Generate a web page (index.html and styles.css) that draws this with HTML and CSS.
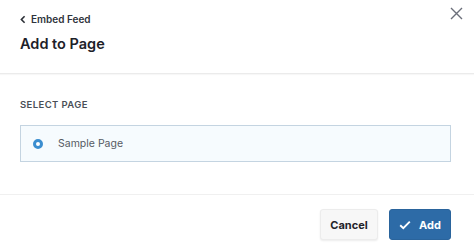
FILE: index.html
```html
<!DOCTYPE html>
<html lang="en">
<head>
<meta charset="utf-8">
<link rel="stylesheet" href="styles.css">
</head>
<body>
<div class="modal">
  <header class="head">
    <a class="back" href="#">
      <svg class="chev" width="6" height="9" viewBox="0 0 6 9"><path d="M4.6 1.2 L1.4 4.5 L4.6 7.8" fill="none" stroke="#2b2f36" stroke-width="1.6"/></svg>
      <span>Embed Feed</span>
    </a>
    <h1 class="title">Add to Page</h1>
    <button class="close" aria-label="Close">
      <svg width="13" height="13" viewBox="0 0 13 13"><path d="M1 1 L12 12 M12 1 L1 12" stroke="#6b6f7a" stroke-width="1.4" fill="none"/></svg>
    </button>
  </header>
  <section class="body">
    <div class="label">SELECT PAGE</div>
    <label class="option">
      <span class="radio"></span>
      <span class="opt-text">Sample Page</span>
    </label>
  </section>
  <footer class="foot">
    <button class="btn cancel">Cancel</button>
    <button class="btn add">
      <svg width="12" height="10" viewBox="0 0 12 10"><path d="M1.2 5.2 L4.3 8.2 L10.8 1.6" fill="none" stroke="#fff" stroke-width="1.9"/></svg>
      <span>Add</span>
    </button>
  </footer>
</div>
</body>
</html>
```
FILE: styles.css
```css
html, body {
  margin: 0;
  padding: 0;
  background: #fff;
}
body {
  font-family: Inter, "Noto Sans", "Liberation Sans", sans-serif;
  color: #1e2229;
}
.modal {
  width: 474px;
  height: 250px;
  overflow: hidden;
}
.head {
  position: relative;
  padding: 12px 23px 19px 20px;
  border-bottom: 1px solid #ebebeb;
  box-shadow: 0 1px 1px rgba(0,0,0,0.03);
}
.back {
  display: flex;
  align-items: center;
  gap: 5px;
  height: 14px;
  font-size: 10px;
  font-weight: 600;
  color: #2f343c;
  text-decoration: none;
}
.chev {
  display: block;
}
.title {
  margin: 8px 0 0;
  font-size: 14.5px;
  line-height: 20px;
  font-weight: 600;
  color: #1d2128;
}
.close {
  position: absolute;
  top: 7px;
  right: 11px;
  border: 0;
  background: none;
  padding: 0;
  width: 13px;
  height: 13px;
}
.close svg {
  display: block;
}
.body {
  padding: 24px 23px 32px 20px;
  border-bottom: 1px solid #f0f0f0;
}
.label {
  font-size: 9.5px;
  line-height: 14px;
  font-weight: 600;
  letter-spacing: 0.4px;
  color: #4a4f57;
}
.option {
  margin-top: 13px;
  height: 35px;
  border: 1px solid #c4d4e1;
  background: #f6fbfe;
  display: flex;
  align-items: center;
  padding-left: 12px;
  gap: 15px;
}
.radio {
  width: 10px;
  height: 10px;
  box-sizing: border-box;
  border-radius: 50%;
  border: 3px solid #3b8ed0;
  background: #fff;
}
.opt-text {
  font-size: 10.5px;
  color: #555a63;
}
.foot {
  display: flex;
  justify-content: flex-end;
  gap: 11px;
  padding: 14px 23px 0 20px;
}
.btn {
  height: 31px;
  border-radius: 3px;
  font-family: Inter, "Noto Sans", "Liberation Sans", sans-serif;
  font-size: 11px;
  font-weight: 700;
  display: flex;
  align-items: center;
  justify-content: center;
  padding: 0;
}
.cancel {
  width: 58px;
  background: #f7f7f7;
  border: 1px solid #ececec;
  color: #1f232a;
  box-shadow: 0 1px 2px rgba(0,0,0,0.08);
}
.add {
  width: 62px;
  background: #2d6ba7;
  border: 1px solid #2a649c;
  color: #fff;
  gap: 8px;
}
.add svg {
  display: block;
}
```
